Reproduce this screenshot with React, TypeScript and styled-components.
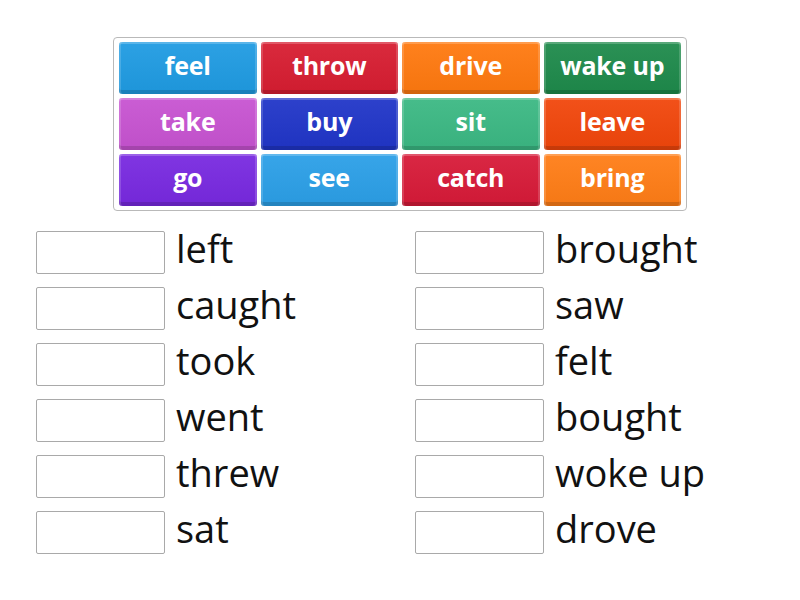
import React from "react";
import styled, { createGlobalStyle } from "styled-components";

const GlobalStyle = createGlobalStyle`
  html, body {
    margin: 0;
    padding: 0;
    background: #ffffff;
    font-family: "Open Sans", "Liberation Sans", sans-serif;
  }
`;

const Page = styled.div`
  width: 800px;
  height: 600px;
  padding-top: 37px;
  box-sizing: border-box;
`;

const Board = styled.div`
  width: 574px;
  margin: 0 auto;
  box-sizing: border-box;
  border: 1px solid #b9b9b9;
  border-radius: 4px;
  padding: 4px 5px;
  display: grid;
  grid-template-columns: repeat(4, 1fr);
  grid-auto-rows: 52px;
  gap: 4px;
`;

const Tile = styled.div<{ $bg: string }>`
  display: flex;
  align-items: center;
  justify-content: center;
  padding-bottom: 6px;
  box-sizing: border-box;
  border-radius: 3px;
  background: ${(p) => p.$bg};
  background-image: linear-gradient(
    to bottom,
    rgba(255, 255, 255, 0.06),
    rgba(0, 0, 0, 0.04)
  );
  box-shadow: inset 0 2px 0 rgba(255, 255, 255, 0.22),
    inset 2px 0 0 rgba(255, 255, 255, 0.16),
    inset -2px 0 0 rgba(255, 255, 255, 0.16),
    inset 0 -4px 0 rgba(0, 0, 0, 0.14);
  color: #ffffff;
  font-weight: 700;
  font-size: 25px;
  letter-spacing: -0.2px;
`;

const Answers = styled.div`
  margin-top: 20px;
  padding-left: 36px;
  display: grid;
  grid-template-columns: 379px 1fr;
  grid-auto-flow: column;
  grid-template-rows: repeat(6, 43px);
  row-gap: 13px;
`;

const AnswerRow = styled.div`
  display: flex;
  align-items: flex-end;
  gap: 11px;
`;

const DropBox = styled.div`
  width: 129px;
  height: 43px;
  flex: none;
  box-sizing: border-box;
  border: 1px solid #a9a9a9;
  border-radius: 2px;
  background: #ffffff;
`;

const Word = styled.span`
  font-size: 38px;
  line-height: normal;
  color: #111111;
  white-space: nowrap;
`;

const tiles: { word: string; color: string }[] = [
  { word: "feel", color: "#1f9be2" },
  { word: "throw", color: "#d71d31" },
  { word: "drive", color: "#ff790f" },
  { word: "wake up", color: "#1e8a4b" },
  { word: "take", color: "#c753d1" },
  { word: "buy", color: "#2035c8" },
  { word: "sit", color: "#3bb883" },
  { word: "leave", color: "#f1460b" },
  { word: "go", color: "#7829e0" },
  { word: "see", color: "#2b9fe7" },
  { word: "catch", color: "#d71a38" },
  { word: "bring", color: "#ff7d16" },
];

const answers = [
  "left",
  "caught",
  "took",
  "went",
  "threw",
  "sat",
  "brought",
  "saw",
  "felt",
  "bought",
  "woke up",
  "drove",
];

export default function App() {
  return (
    <>
      <GlobalStyle />
      <Page>
        <Board>
          {tiles.map((t) => (
            <Tile key={t.word} $bg={t.color}>
              {t.word}
            </Tile>
          ))}
        </Board>
        <Answers>
          {answers.map((a) => (
            <AnswerRow key={a}>
              <DropBox />
              <Word>{a}</Word>
            </AnswerRow>
          ))}
        </Answers>
      </Page>
    </>
  );
}
